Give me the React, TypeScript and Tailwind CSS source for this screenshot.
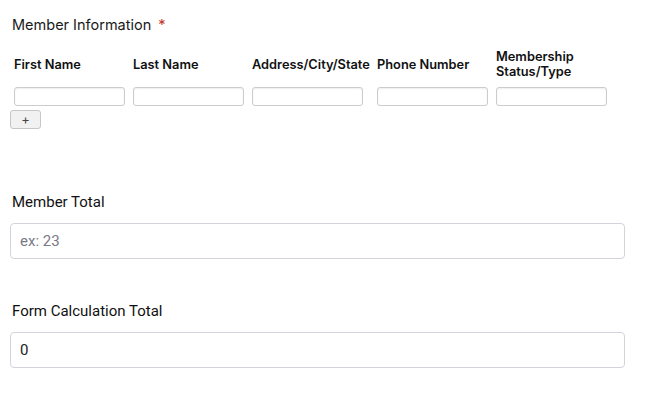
export default function App() {
  const cols = [
    "First Name",
    "Last Name",
    "Address/City/State",
    "Phone Number",
    "Membership Status/Type",
  ];

  return (
    <div className="w-[652px] h-[410px] bg-white text-[#111] font-['Inter',sans-serif] overflow-hidden">
      <div className="pt-[15px] pl-[12px]">
        <div className="flex items-center text-[14.5px] leading-[20px] text-[#1a1a1a]">
          Member Information
          <span className="ml-[7px] text-[#c0392b]">*</span>
        </div>

        <div className="mt-[12px] ml-[2px] grid grid-cols-[119px_119px_125px_119px_auto] items-center">
          {cols.map((c) => (
            <div
              key={c}
              className="h-[34px] flex items-center text-[12.8px] leading-[15px] font-semibold text-[#111] pr-1"
            >
              <span className="max-w-[100px]">{c}</span>
            </div>
          ))}
          {cols.map((c) => (
            <div key={c + "-in"} className="pt-[6px]">
              <input
                type="text"
                className="block w-[111px] h-[19px] border border-[#cccccc] rounded-[3px] bg-white shadow-[inset_0_1px_2px_rgba(0,0,0,0.07)] outline-none"
              />
            </div>
          ))}
        </div>

        <button className="mt-[4px] -ml-[2px] w-[31px] h-[19px] flex items-center justify-center bg-[#f1f1f1] border border-[#c6c6c6] rounded-[3px] text-[13px] leading-none text-[#444]">
          +
        </button>

        <div className="mt-[63px] text-[15px] leading-[20px] font-['Roboto',sans-serif] text-[#111]">
          Member Total
        </div>
        <div className="mt-[11px] -ml-[2px] w-[615px] h-[36px] border border-[#d3d3de] rounded-[4px] flex items-center px-[9px] font-['Roboto',sans-serif] text-[15px] text-[#7a7a85]">
          ex: 23
        </div>

        <div className="mt-[42px] text-[15px] leading-[20px] font-['Roboto',sans-serif] text-[#111]">
          Form Calculation Total
        </div>
        <div className="mt-[11px] -ml-[2px] w-[615px] h-[36px] border border-[#d3d3de] rounded-[4px] flex items-center px-[9px] font-['Roboto',sans-serif] text-[15px] text-[#222]">
          0
        </div>
      </div>
    </div>
  );
}
